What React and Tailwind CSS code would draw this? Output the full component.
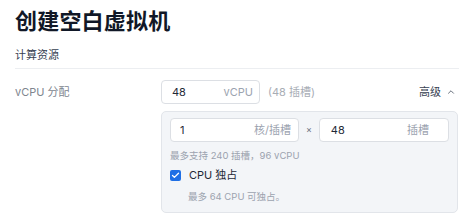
import { ChevronUp, Check } from 'lucide-react';

const FONT = { fontFamily: 'Inter, "Noto Sans CJK SC", sans-serif' };

export default function App() {
  return (
    <div className="w-[474px] h-[220px] bg-white overflow-hidden text-[#1f2937]" style={FONT}>
      <div className="pl-[15px] pr-[15px] pt-[7px]">
        <h1 className="text-[22px] leading-[28px] font-bold text-[#111827] tracking-[0.2px]">创建空白虚拟机</h1>

        {/* section header */}
        <div className="mt-[13px] pb-[6px] border-b border-[#eceef1] text-[11px] leading-[14px] text-[#374151]">
          计算资源
        </div>

        {/* vCPU row */}
        <div className="mt-[11px] flex items-center">
          <div className="w-[146px] text-[11px] text-[#80868f]">vCPU 分配</div>
          <div className="w-[99px] h-[24px] rounded-[4px] border border-[#dcdfe4] flex items-center justify-between pl-[10px] pr-[6px] text-[11px]">
            <span className="text-[#1f2937]">48</span>
            <span className="text-[#9ca3af]">vCPU</span>
          </div>
          <span className="ml-[8px] text-[11px] text-[#a8adb5]">(48 插槽)</span>
          <div className="ml-auto flex items-center gap-[5px] pr-[3px] text-[11px] text-[#374151]">
            高级
            <ChevronUp size={10} strokeWidth={2} className="text-[#4b5563]" />
          </div>
        </div>

        {/* advanced panel */}
        <div className="mt-[7px] ml-[146px] w-[297px] rounded-[5px] border border-[#e2e5ea] bg-[#f3f5f8] px-[8px] pt-[6px] pb-[9px]">
          <div className="flex items-center">
            <div className="w-[130px] h-[24px] rounded-[4px] border border-[#dcdfe4] bg-white flex items-center justify-between pl-[9px] pr-[7px] text-[11px]">
              <span className="text-[#1f2937]">1</span>
              <span className="text-[#9ca3af]">核/插槽</span>
            </div>
            <span className="w-[20px] text-center text-[9px] text-[#6b7280]">×</span>
            <div className="w-[131px] h-[24px] rounded-[4px] border border-[#dcdfe4] bg-white flex items-center justify-between pl-[11px] pr-[19px] text-[11px]">
              <span className="text-[#1f2937]">48</span>
              <span className="text-[#9ca3af]">插槽</span>
            </div>
          </div>
          <div className="mt-[8px] text-[9.5px] leading-[12px] text-[#9ca3af]">最多支持 240 插槽，96 vCPU</div>
          <div className="mt-[5px] flex items-center">
            <span className="w-[11px] h-[11px] rounded-[2px] bg-[#1f6fe5] flex items-center justify-center">
              <Check size={9} strokeWidth={3.5} className="text-white" />
            </span>
            <span className="ml-[8px] text-[11px] text-[#1f2937]">CPU 独占</span>
          </div>
          <div className="mt-[7px] pl-[18px] text-[9.5px] leading-[12px] text-[#9ca3af]">最多 64 CPU 可独占。</div>
        </div>
      </div>
    </div>
  );
}
